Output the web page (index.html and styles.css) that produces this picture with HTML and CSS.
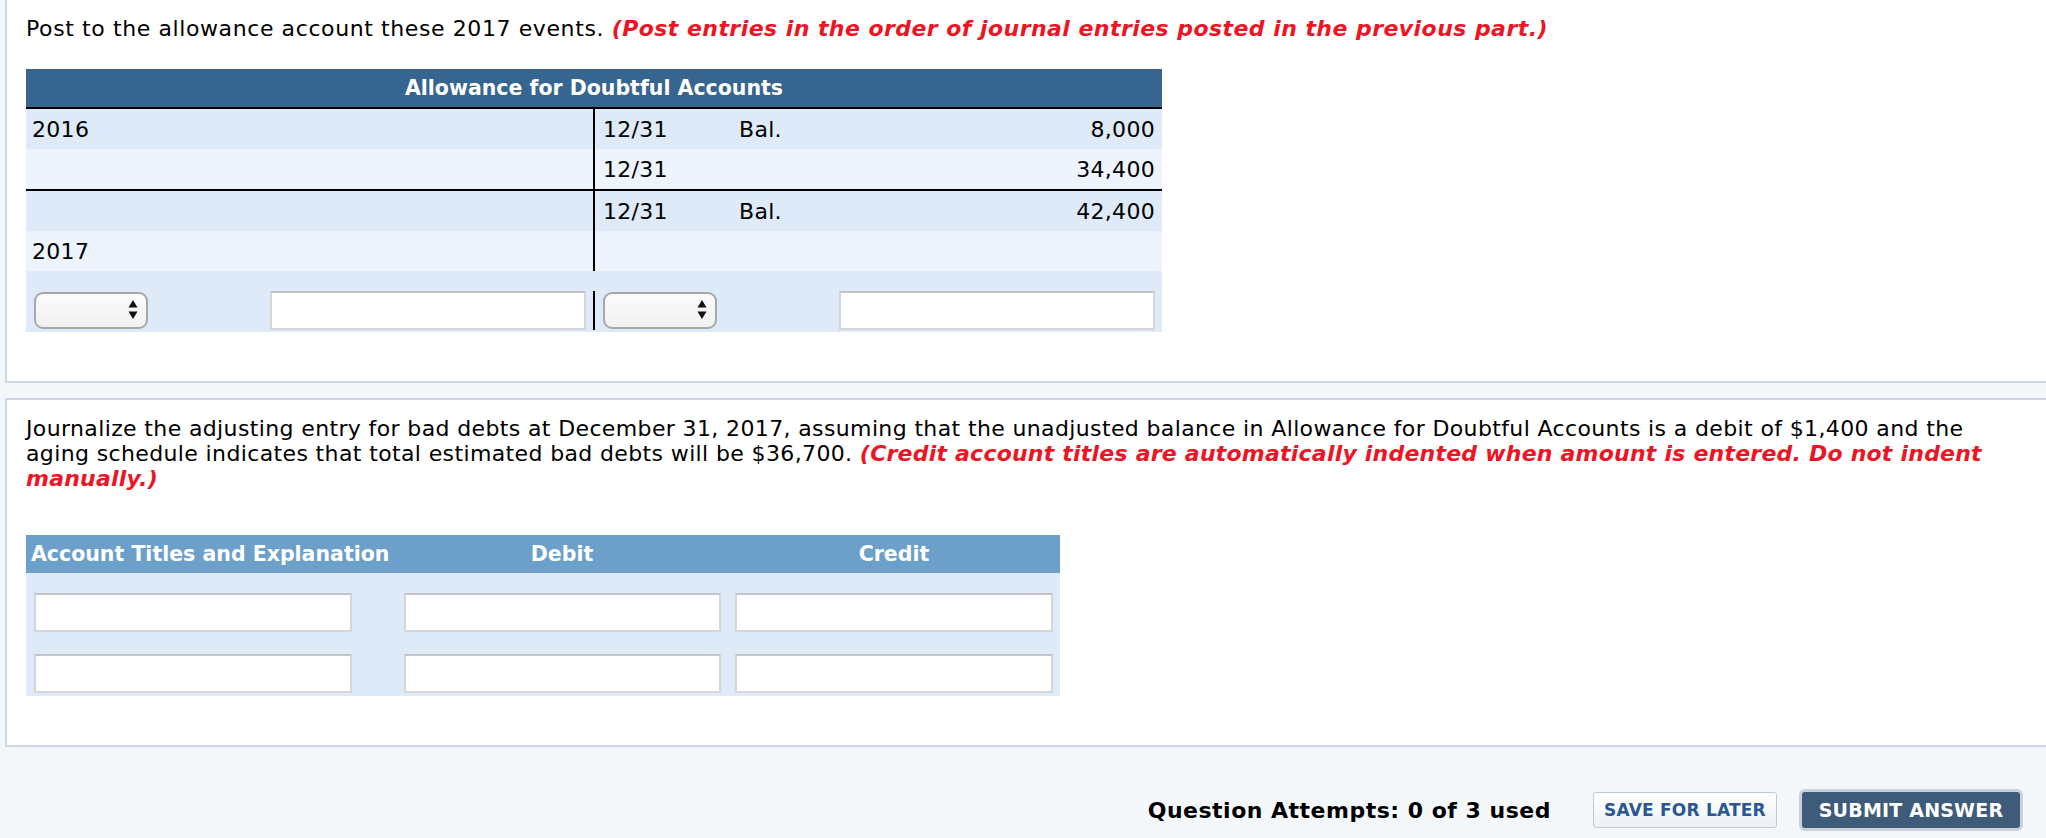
FILE: index.html
```html
<!DOCTYPE html>
<html lang="en">
<head>
<meta charset="utf-8">
<title>Allowance for Doubtful Accounts</title>
<link rel="stylesheet" href="styles.css">
</head>
<body>
<div class="page">
  <section class="panel panel-first">
    <p class="prompt">Post to the allowance account these 2017 events. <em class="note">(Post entries in the order of journal entries posted in the previous part.)</em></p>
    <div class="taccount">
      <div class="ta-head">Allowance for Doubtful Accounts</div>
      <div class="ta-row dark">
        <div class="half left"><span class="c1">2016</span></div>
        <div class="half right"><span class="c1">12/31</span><span class="c2">Bal.</span><span class="c3">8,000</span></div>
      </div>
      <div class="ta-row light ruled">
        <div class="half left"></div>
        <div class="half right"><span class="c1">12/31</span><span class="c2"></span><span class="c3">34,400</span></div>
      </div>
      <div class="ta-row dark">
        <div class="half left"></div>
        <div class="half right"><span class="c1">12/31</span><span class="c2">Bal.</span><span class="c3">42,400</span></div>
      </div>
      <div class="ta-row light">
        <div class="half left"><span class="c1">2017</span></div>
        <div class="half right"></div>
      </div>
      <div class="ta-row dark entry">
        <div class="half left">
          <span class="sel c1"><span class="sel-box" role="combobox" aria-label="Date" tabindex="0"></span><svg class="sel-arrows" width="10" height="20" viewBox="0 0 10 20"><path d="M5 0 L9.5 7.5 L0.5 7.5 Z M0.5 11.5 L9.5 11.5 L5 19 Z" fill="#111"/></svg></span>
          <input class="field c3" type="text">
        </div>
        <div class="half right">
          <span class="sel c1"><span class="sel-box" role="combobox" aria-label="Date" tabindex="0"></span><svg class="sel-arrows" width="10" height="20" viewBox="0 0 10 20"><path d="M5 0 L9.5 7.5 L0.5 7.5 Z M0.5 11.5 L9.5 11.5 L5 19 Z" fill="#111"/></svg></span>
          <input class="field c3" type="text">
        </div>
      </div>
    </div>
  </section>

  <section class="panel panel-second">
    <p class="prompt para">Journalize the adjusting entry for bad debts at December 31, 2017, assuming that the unadjusted balance in Allowance for Doubtful Accounts is a debit of $1,400 and the aging schedule indicates that total estimated bad debts will be $36,700. <em class="note">(Credit account titles are automatically indented when amount is entered. Do not indent manually.)</em></p>
    <div class="journal">
      <div class="j-head">
        <span class="jh jh-title">Account Titles and Explanation</span>
        <span class="jh jh-center">Debit</span>
        <span class="jh jh-center">Credit</span>
      </div>
      <div class="j-body">
        <div class="j-row">
          <input class="field j1" type="text">
          <input class="field j2" type="text">
          <input class="field j3" type="text">
        </div>
        <div class="j-row">
          <input class="field j1" type="text">
          <input class="field j2" type="text">
          <input class="field j3" type="text">
        </div>
      </div>
    </div>
  </section>

  <footer class="footer">
    <span class="attempts">Question Attempts: 0 of 3 used</span>
    <button class="btn btn-save" type="button">SAVE FOR LATER</button>
    <button class="btn btn-submit" type="button">SUBMIT ANSWER</button>
  </footer>
</div>
</body>
</html>
```
FILE: styles.css
```css
* { box-sizing: border-box; }

html, body {
  margin: 0;
  height: 100%;
}

body {
  background: #f4f7fa;
  font-family: "DejaVu Sans", Verdana, sans-serif;
  color: #000;
  overflow: hidden;
}

.page {
  padding-left: 5px;
}

.panel {
  background: #fff;
  border-left: 2px solid #cdd6e2;
  border-bottom: 2px solid #cdd6e2;
  padding-left: 19px;
}

.panel-first {
  padding-top: 16px;
  padding-bottom: 49px;
}

.panel-second {
  margin-top: 15px;
  border-top: 2px solid #cdd6e2;
  padding-top: 16px;
  padding-bottom: 49px;
}

.prompt {
  margin: 0;
  font-size: 22px;
  line-height: 25px;
  letter-spacing: 0.6px;
}

.para {
  width: 1985px;
  letter-spacing: 0.37px;
}

.note {
  color: #ee1424;
  font-weight: bold;
  font-style: italic;
  letter-spacing: 0.45px;
}

.para .note {
  letter-spacing: 0.22px;
}

/* T-account */
.taccount {
  margin-top: 28px;
  width: 1136px;
}

.ta-head {
  height: 40px;
  background: #366590;
  border-bottom: 2px solid #000;
  color: #fff;
  font-weight: bold;
  font-size: 20.5px;
  line-height: 38px;
  text-align: center;
}

.ta-row {
  display: flex;
  height: 40px;
  font-size: 22px;
  letter-spacing: 0.3px;
}

.ta-row.dark { background: #deeaf7; }
.ta-row.light { background: #edf4fd; }

.ta-row.ruled {
  height: 42px;
  border-bottom: 2px solid #000;
}

.ta-row.entry {
  height: 61px;
  padding-top: 20px;
  padding-bottom: 2px;
}

.half {
  display: grid;
  grid-template-columns: 136px 100px 1fr;
  align-items: center;
  padding: 0 7px 0 8px;
}

.half.left {
  width: 569px;
  border-right: 2px solid #000;
  padding-left: 6px;
}

.ta-row.entry .half.left { padding-left: 8px; }

.half.right {
  width: 567px;
}

.c1 { grid-column: 1; }
.c2 { grid-column: 2; }
.c3 { grid-column: 3; text-align: right; }

/* selects */
.sel {
  position: relative;
  display: block;
  width: 114px;
  height: 37px;
}

.sel-box {
  display: block;
  width: 114px;
  height: 37px;
  border: 2px solid #a8a8a8;
  border-radius: 9px;
  background: linear-gradient(#fbfbfb, #f1f1f1);
}

.sel-arrows {
  position: absolute;
  right: 10px;
  top: 8px;
  pointer-events: none;
}

/* inputs */
.field {
  display: block;
  height: 39px;
  margin: 0;
  background: #fff;
  border: 2px solid #d6d6d6;
  border-top-color: #c4c4c4;
  border-radius: 0;
}

.half .field {
  width: 100%;
}

/* journal */
.journal {
  margin-top: 44px;
  width: 1034px;
}

.j-head,
.j-row {
  display: grid;
  grid-template-columns: 370px 332px 332px;
}

.j-head {
  height: 38px;
  background: #6c9fca;
  color: #fff;
  font-weight: bold;
  font-size: 20.5px;
  line-height: 38px;
}

.jh-title { padding-left: 5px; }
.jh-center { text-align: center; }

.j-body {
  background: #deeaf7;
  padding: 20px 0 3px;
  display: flex;
  flex-direction: column;
  gap: 22px;
}

.j1 { width: 318px; margin-left: 8px; }
.j2 { width: 317px; margin-left: 8px; }
.j3 { width: 318px; margin-left: 7px; }

/* footer */
.footer {
  display: flex;
  justify-content: flex-end;
  align-items: center;
  padding: 45px 26px 0 0;
}

.attempts {
  font-weight: bold;
  font-size: 22px;
  letter-spacing: 0.5px;
  margin-right: 42px;
}

.btn {
  height: 36px;
  margin: 0;
  font-family: "DejaVu Sans", Verdana, sans-serif;
  font-weight: bold;
  border-radius: 3px;
  cursor: pointer;
}

.btn-save {
  width: 184px;
  font-size: 17px;
  letter-spacing: 0.2px;
  color: #2a5791;
  background: linear-gradient(#ffffff, #edf1f5);
  border: 1px solid #bccadb;
}

.btn-submit {
  width: 218px;
  margin-left: 25px;
  font-size: 19px;
  letter-spacing: 0.2px;
  color: #fff;
  background: #3e5b79;
  border: none;
  box-shadow: 0 0 0 3px #c8d1dc;
}
```
